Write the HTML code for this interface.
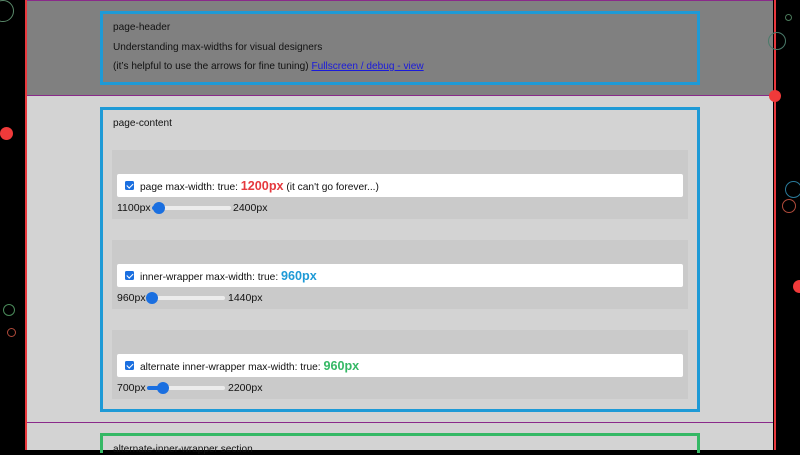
<!DOCTYPE html>
<html><head><style>
*{box-sizing:border-box;margin:0;padding:0}
body{width:800px;height:450px;background:#000;position:relative;overflow:hidden;font-family:"Liberation Sans",sans-serif;font-size:10.5px;color:#111}
.abs{position:absolute}
.page{left:25px;top:0;width:751px;height:450px;border-left:2px solid #e8383d;border-right:2px solid #e8383d}
.hdr{left:27px;top:0;width:746px;height:96px;background:#808080;border-bottom:1px solid #8a2a8a;border-top:1px solid #8a2a8a}
.cnt{left:27px;top:96px;width:746px;height:327px;background:#d3d3d3;border-bottom:1px solid #8a2a8a}
.alt{left:27px;top:423px;width:746px;height:27px;background:#d3d3d3}
.box{border:3px solid #1e9ad6}
.t{position:absolute;left:113px;white-space:nowrap;font-size:10.1px}
.sec{position:absolute;left:112px;width:576px;height:69px;background:#cacaca}
.row{position:absolute;left:5px;top:24px;width:566px;height:23px;background:#fff;border-radius:2px}
.cb{position:absolute;left:8px;top:7px;width:9px;height:9px;background:#1a6fe0;border-radius:1.5px}
.cb:after{content:"";position:absolute;left:2.5px;top:0.5px;width:2.5px;height:5px;border:solid #fff;border-width:0 1.4px 1.4px 0;transform:rotate(45deg)}
.lbl{position:absolute;left:23px;top:5px;white-space:nowrap;font-size:10.2px}
.big{font-weight:bold;font-size:12.6px}
.sl{position:absolute;left:5px;top:52px;white-space:nowrap;font-size:10.5px}
.track{position:absolute;height:4px;background:#ececec;border-radius:2px;top:56px}
.fill{position:absolute;height:4px;background:#1a6fe0;border-radius:2px;top:56px}
.th{position:absolute;width:12px;height:12px;border-radius:50%;background:#1a6fe0;top:52px}
.c{position:absolute;border-radius:50%}
</style></head><body>
<div class="abs page"></div>
<div class="abs hdr"></div>
<div class="abs cnt"></div>
<div class="abs alt"></div>
<div class="abs box" style="left:100px;top:11px;width:600px;height:74px"></div>
<div class="t" style="top:22px">page-header</div>
<div class="t" style="top:42px">Understanding max-widths for visual designers</div>
<div class="t" style="top:61px">(it’s helpful to use the arrows for fine tuning) <span style="color:#1a1adb;text-decoration:underline">Fullscreen / debug - view</span></div>
<div class="abs box" style="left:100px;top:107px;width:600px;height:305px"></div>
<div class="t" style="top:118px">page-content</div>

<div class="sec" style="top:150px"><div class="row"><div class="cb"></div><div class="lbl">page max-width: true: <span class="big" style="color:#e5393e">1200px</span> (it can't go forever...)</div></div>
<div class="sl">1100px</div><div class="track" style="left:40px;width:79px"></div><div class="fill" style="left:40px;width:10px"></div><div class="th" style="left:41px"></div><div class="sl" style="left:121px">2400px</div></div>

<div class="sec" style="top:240px"><div class="row"><div class="cb"></div><div class="lbl">inner-wrapper max-width: true: <span class="big" style="color:#1e9ad6">960px</span></div></div>
<div class="sl">960px</div><div class="track" style="left:35px;width:78px"></div><div class="th" style="left:34px"></div><div class="sl" style="left:116px">1440px</div></div>

<div class="sec" style="top:330px"><div class="row"><div class="cb"></div><div class="lbl">alternate inner-wrapper max-width: true: <span class="big" style="color:#35b865">960px</span></div></div>
<div class="sl">700px</div><div class="track" style="left:35px;width:78px"></div><div class="fill" style="left:35px;width:16px"></div><div class="th" style="left:45px"></div><div class="sl" style="left:116px">2200px</div></div>

<div class="abs" style="left:100px;top:433px;width:600px;height:20px;border:3px solid #35b865;border-bottom:none"></div>
<div class="t" style="top:444px">alternate-inner-wrapper section</div>

<div class="c" style="left:0;top:127px;width:13px;height:13px;background:#f03a3a"></div>
<div class="c" style="left:-8px;top:0;width:22px;height:22px;border:1px solid #5a8a6a"></div>
<div class="c" style="left:3px;top:304px;width:12px;height:12px;border:1px solid #4a8a5a"></div>
<div class="c" style="left:7px;top:328px;width:9px;height:9px;border:1px solid #b04a3a"></div>
<div class="c" style="left:769px;top:90px;width:12px;height:12px;background:#f03a3a"></div>
<div class="c" style="left:785px;top:14px;width:7px;height:7px;border:1px solid #4a7a5a"></div>
<div class="c" style="left:768px;top:32px;width:18px;height:18px;border:1px solid #4a7a6a"></div>
<div class="c" style="left:785px;top:181px;width:17px;height:17px;border:1px solid #2a7a9a"></div>
<div class="c" style="left:782px;top:199px;width:14px;height:14px;border:1px solid #b04a3a"></div>
<div class="c" style="left:793px;top:280px;width:13px;height:13px;background:#f03a3a"></div>
</body></html>
